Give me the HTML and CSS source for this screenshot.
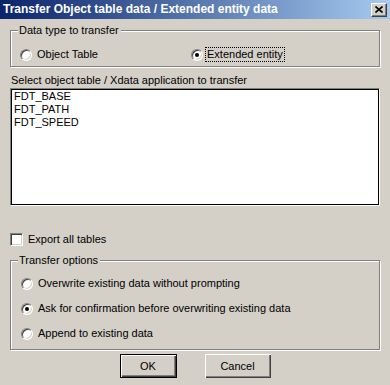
FILE: index.html
```html
<!DOCTYPE html>
<html lang="en">
<head>
    <meta charset="utf-8">
    <title>Transfer Object table data / Extended entity data</title>
    <link rel="stylesheet" href="styles.css">
</head>
<body>
<div class="window">
    <div class="titlebar">
        <span class="title">Transfer Object table data / Extended entity data</span>
        <span class="close">
            <svg width="8" height="7" viewBox="0 0 8 7"><path d="M0.5 0.5 L7.5 6.5 M7.5 0.5 L0.5 6.5" stroke="#000" stroke-width="1.6"/></svg>
        </span>
    </div>
    <div class="content">
        <div class="group group_type">
            <div class="legend">Data type to transfer</div>
            <div class="type_row">
                <div class="option"><span class="radio"></span><span class="opt_txt">Object Table</span></div>
                <div class="option"><span class="radio checked"></span><span class="opt_txt focus">Extended entity</span></div>
            </div>
        </div>

        <div class="list_label">Select object table / Xdata application to transfer</div>
        <div class="listbox">
            <div class="item">FDT_BASE</div>
            <div class="item">FDT_PATH</div>
            <div class="item">FDT_SPEED</div>
        </div>

        <div class="check_row"><span class="checkbox"></span><span class="check_txt">Export all tables</span></div>

        <div class="group group_opts">
            <div class="legend">Transfer options</div>
            <div class="option opt_row"><span class="radio"></span><span class="opt_txt">Overwrite existing data without prompting</span></div>
            <div class="option opt_row"><span class="radio checked"></span><span class="opt_txt">Ask for confirmation before overwriting existing data</span></div>
            <div class="option opt_row"><span class="radio"></span><span class="opt_txt">Append to existing data</span></div>
        </div>

        <div class="buttons">
            <div class="btn btn_default">OK</div>
            <div class="btn btn_cancel">Cancel</div>
        </div>
    </div>
</div>
</body>
</html>
```

FILE: styles.css
```css
body{
    margin: 0;
    background: #D4D0C8;
}
.window{
    width: 390px;
    height: 385px;
    background: #D4D0C8;
    font-family: "Liberation Sans", Arial, sans-serif;
    font-size: 11px;
    line-height: 13px;
    color: #000;
    overflow: hidden;
}

/* title bar */
.titlebar{
    height: 19px;
    display: flex;
    align-items: center;
    justify-content: space-between;
    padding: 0 3px 0 3px;
    background: linear-gradient(to right, #0A246A, #A6CAF0);
}
.title{
    color: #fff;
    font-weight: bold;
    font-size: 12px;
}
.close{
    width: 16px;
    height: 14px;
    box-sizing: border-box;
    background: #D4D0C8;
    border: 1px solid;
    border-color: #fff #404040 #404040 #fff;
    box-shadow: inset -1px -1px 0 #808080;
    display: flex;
    align-items: center;
    justify-content: center;
}
.close svg{
    display: block;
}

.content{
    padding: 0 10px;
}

/* group boxes */
.group{
    width: 370px;
    box-sizing: border-box;
    border: 1px solid #808080;
    box-shadow: 1px 1px 0 #fff, inset 1px 1px 0 #fff;
}
.legend{
    width: max-content;
    margin: -7px 0 0 7px;
    padding: 0 2px 0 1px;
    background: #D4D0C8;
}
.group_type{
    margin-top: 11px;
    padding-bottom: 5px;
}
.type_row{
    display: grid;
    grid-template-columns: 171px auto;
    margin-top: 11px;
    padding-left: 9px;
}
.option{
    display: flex;
    align-items: center;
    height: 13px;
}
.opt_txt{
    margin-left: 5px;
}
.focus{
    margin-left: 3px;
    padding: 0 1px;
    outline: 1px dotted #000;
}

/* radio and checkbox */
.radio{
    width: 10px;
    height: 10px;
    border-radius: 50%;
    border: 1px solid;
    border-color: #808080 #fff #fff #808080;
    background: #fff;
    box-shadow: inset 1px 1px 0 #404040, inset -1px -1px 0 #D4D0C8;
    position: relative;
    flex: none;
}
.checked::after{
    content: "";
    position: absolute;
    left: 3px;
    top: 3px;
    width: 4px;
    height: 4px;
    border-radius: 50%;
    background: #000;
}
.checkbox{
    width: 11px;
    height: 11px;
    border: 1px solid;
    border-color: #808080 #fff #fff #808080;
    background: #fff;
    box-shadow: inset 1px 1px 0 #404040, inset -1px -1px 0 #D4D0C8;
    flex: none;
}

/* list */
.list_label{
    margin-top: 7px;
    padding-left: 1px;
}
.listbox{
    margin-top: 1px;
    width: 370px;
    height: 118px;
    box-sizing: border-box;
    border: 1px solid;
    border-color: #808080 #fff #fff #808080;
    box-shadow: inset 1px 1px 0 #000, inset -1px -1px 0 #000;
    background: #fff;
    padding: 1px 0 0 3px;
}
.item{
    height: 13px;
}

.check_row{
    display: flex;
    align-items: center;
    margin-top: 27px;
    height: 13px;
}
.check_txt{
    margin-left: 5px;
}

.group_opts{
    margin-top: 14px;
    padding-bottom: 9px;
}
.opt_row{
    margin-top: 12px;
    padding-left: 10px;
}
.group_opts .legend + .opt_row{
    margin-top: 10px;
}

/* buttons */
.buttons{
    display: flex;
    justify-content: center;
    gap: 28px;
    margin-top: 4px;
}
.btn{
    height: 24px;
    box-sizing: border-box;
    display: flex;
    align-items: center;
    justify-content: center;
    background: #D4D0C8;
    box-shadow: inset 1px 1px 0 #fff, inset -1px -1px 0 #404040, inset -2px -2px 0 #808080;
}
.btn_default{
    width: 57px;
    border: 1px solid #000;
}
.btn_cancel{
    width: 66px;
}
```
